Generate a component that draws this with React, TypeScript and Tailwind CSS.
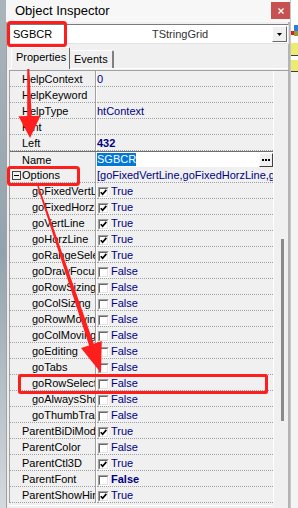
import React from "react";

type Row =
  | { kind: "text"; name: string; value: string; bold?: boolean }
  | { kind: "check"; name: string; sub?: boolean; on: boolean; bold?: boolean }
  | { kind: "name" }
  | { kind: "options" };

const rows: Row[] = [
  { kind: "text", name: "HelpContext", value: "0" },
  { kind: "text", name: "HelpKeyword", value: "" },
  { kind: "text", name: "HelpType", value: "htContext" },
  { kind: "text", name: "Hint", value: "" },
  { kind: "text", name: "Left", value: "432", bold: true },
  { kind: "name" },
  { kind: "options" },
  { kind: "check", name: "goFixedVertLine", sub: true, on: true },
  { kind: "check", name: "goFixedHorzLine", sub: true, on: true },
  { kind: "check", name: "goVertLine", sub: true, on: true },
  { kind: "check", name: "goHorzLine", sub: true, on: true },
  { kind: "check", name: "goRangeSelect", sub: true, on: true },
  { kind: "check", name: "goDrawFocusSelected", sub: true, on: false },
  { kind: "check", name: "goRowSizing", sub: true, on: false },
  { kind: "check", name: "goColSizing", sub: true, on: false },
  { kind: "check", name: "goRowMoving", sub: true, on: false },
  { kind: "check", name: "goColMoving", sub: true, on: false },
  { kind: "check", name: "goEditing", sub: true, on: false },
  { kind: "check", name: "goTabs", sub: true, on: false },
  { kind: "check", name: "goRowSelect", sub: true, on: false },
  { kind: "check", name: "goAlwaysShowEditor", sub: true, on: false },
  { kind: "check", name: "goThumbTracking", sub: true, on: false },
  { kind: "check", name: "ParentBiDiMode", on: true },
  { kind: "check", name: "ParentColor", on: false },
  { kind: "check", name: "ParentCtl3D", on: true },
  { kind: "check", name: "ParentFont", on: false, bold: true },
  { kind: "check", name: "ParentShowHint", on: true },
];

const dotted = "border-b border-dotted border-[#a0a0a0]";

function Sep() {
  return (
    <>
      <div className="w-px shrink-0 bg-[#a0a0a0]" />
      <div className="w-px shrink-0 bg-white" />
    </>
  );
}

function Check({ on }: { on: boolean }) {
  return (
    <span className="mt-[4px] flex h-[11px] w-[11px] shrink-0 border-t border-l border-t-[#a0a0a0] border-l-[#a0a0a0] border-r border-b border-r-white border-b-white">
      <span className="flex flex-1 items-center justify-center border-t border-l border-t-[#696969] border-l-[#696969] border-r border-b border-r-[#e3e3e3] border-b-[#e3e3e3] bg-white">
        {on && (
          <svg width="7" height="7" viewBox="0 0 7 7">
            <path d="M0.8 3.2 L2.6 5.2 L6.4 0.9" fill="none" stroke="#000" strokeWidth="1.7" />
          </svg>
        )}
      </span>
    </span>
  );
}

function GridRow({ row }: { row: Row }) {
  if (row.kind === "name") {
    return (
      <div className="flex h-[16px] border-t border-[#6f6f6f]">
        <div className="w-[85px] overflow-hidden whitespace-nowrap pl-[12px] pt-[1px] leading-[14px]">Name</div>
        <Sep />
        <div className="flex w-[176px] items-start justify-between bg-white">
          <span className="mt-[1px] bg-[#0078d7] leading-[13px] text-white">SGBCR</span>
          <span className="mt-[1px] flex h-[14px] w-[14px] items-center justify-center gap-[1px] border-t border-l border-white border-r border-b border-r-[#404040] border-b-[#404040] bg-[#f0f0f0]">
            <span className="h-[2px] w-[2px] bg-black" />
            <span className="h-[2px] w-[2px] bg-black" />
            <span className="h-[2px] w-[2px] bg-black" />
          </span>
        </div>
      </div>
    );
  }
  if (row.kind === "options") {
    return (
      <div className="flex h-[16px]">
        <div className={`flex w-[85px] ${dotted}`}>
          <span className="ml-[2px] mt-[4px] flex h-[9px] w-[9px] items-center justify-center border border-[#404040] bg-[#f0f0f0]">
            <span className="h-px w-[5px] bg-black" />
          </span>
          <span className="ml-[1px] pt-[1px] leading-[15px]">Options</span>
        </div>
        <Sep />
        <div className={`w-[176px] overflow-hidden whitespace-nowrap pt-[1px] leading-[15px] text-[#000080] ${dotted}`}>
          [goFixedVertLine,goFixedHorzLine,goVertLine,goHorzLine,goRangeSelect]
        </div>
      </div>
    );
  }
  const indent = row.kind === "check" && row.sub ? "pl-[22px]" : "pl-[12px]";
  return (
    <div className="flex h-[16px]">
      <div className={`w-[85px] overflow-hidden whitespace-nowrap pt-[1px] leading-[15px] ${indent} ${dotted}`}>
        {row.name}
      </div>
      <Sep />
      <div className={`flex w-[176px] overflow-hidden whitespace-nowrap text-[#000080] ${dotted}`}>
        {row.kind === "text" ? (
          <span className={`pt-[1px] leading-[15px] ${row.bold ? "font-bold" : ""}`}>{row.value}</span>
        ) : (
          <>
            <span className="ml-[1px]">
              <Check on={row.on} />
            </span>
            <span className={`ml-[2px] pt-[1px] leading-[15px] ${row.bold ? "font-bold" : ""}`}>
              {row.on ? "True" : "False"}
            </span>
          </>
        )}
      </div>
    </div>
  );
}

function arrow(x0: number, y0: number, x1: number, y1: number, w0: number, w1: number, hl: number, hw: number) {
  const len = Math.hypot(x1 - x0, y1 - y0);
  const dx = (x1 - x0) / len;
  const dy = (y1 - y0) / len;
  const nx = -dy;
  const ny = dx;
  const bx = x1 - dx * hl;
  const by = y1 - dy * hl;
  const pts = [
    [x0 + (nx * w0) / 2, y0 + (ny * w0) / 2],
    [bx + (nx * w1) / 2, by + (ny * w1) / 2],
    [bx + (nx * hw) / 2, by + (ny * hw) / 2],
    [x1, y1],
    [bx - (nx * hw) / 2, by - (ny * hw) / 2],
    [bx - (nx * w1) / 2, by - (ny * w1) / 2],
    [x0 - (nx * w0) / 2, y0 - (ny * w0) / 2],
  ];
  return pts.map((p) => p.map((v) => v.toFixed(1)).join(",")).join(" ");
}

export default function App() {
  return (
    <div className="relative flex h-[508px] w-[298px] overflow-hidden font-['Liberation_Sans',Arial,sans-serif] text-[11px] text-black">
      {/* desktop behind */}
      <div className="w-[6px] shrink-0 bg-gradient-to-b from-[#aab4bb] via-[#93a3ad] to-[#d5dade]" />

      <div className="flex w-[284px] shrink-0 flex-col bg-[#f0f0f0]">
        {/* title bar */}
        <div className="flex h-[22px] justify-between bg-[#f7f7f7]">
          <span className="pl-[9px] text-[13px] leading-[21px] text-black">Object Inspector</span>
          <span className="mt-[2px] flex h-[17px] w-[19px] items-center justify-center bg-[#c75050]">
            <svg width="6" height="6" viewBox="0 0 6 6">
              <path d="M0.5 0.5 L5.5 5.5 M5.5 0.5 L0.5 5.5" stroke="#fff" strokeWidth="1.4" />
            </svg>
          </span>
        </div>

        <div className="flex flex-1 flex-col border-l border-r-2 border-l-[#a0a0a0] border-r-[#b4b4b4] pl-px">
          <div className="h-[2px]" />
          {/* component combo */}
          <div className="ml-px flex h-[20px] w-[280px] items-center border-t border-l border-t-[#7a7a7a] border-l-[#7a7a7a] border-r border-b border-r-[#e3e3e3] border-b-[#e3e3e3] bg-white">
            <span className="w-[142px] pl-[3px] leading-[18px]">SGBCR</span>
            <span className="flex-1 leading-[18px] text-[#333]">TStringGrid</span>
            <span className="mr-px flex h-[16px] w-[15px] items-center justify-center border-t border-l border-white border-r border-b border-r-[#696969] border-b-[#696969] bg-[#f0f0f0]">
              <svg width="5" height="3" viewBox="0 0 5 3">
                <path d="M0 0 H5 L2.5 3 Z" fill="#000" />
              </svg>
            </span>
          </div>

          {/* tabs */}
          <div className="flex h-[25px] items-end border-b border-white pl-[3px]">
            <div className="relative z-10 -mb-px h-[22px] w-[59px] rounded-t-[2px] border-t border-l border-white border-r border-r-[#696969] bg-[#f0f0f0] pl-[4px] pt-[2px] leading-[15px]">
              Properties
            </div>
            <div className="h-[18px] w-[44px] rounded-tr-[2px] border-t border-white border-r-2 border-r-[#808080] pl-[4px] pt-[1px] leading-[15px]">
              Events
            </div>
          </div>

          <div className="h-px" />
          <div className="ml-px h-px w-[280px] bg-[#a0a0a0]" />

          {/* grid + scrollbar */}
          <div className="flex h-[432px]">
            <div className="ml-px flex w-[264px] flex-col border-l border-[#a0a0a0] bg-[#f0f0f0]">
              {rows.map((r, i) => (
                <GridRow key={i} row={r} />
              ))}
            </div>
            <div className="w-px bg-white" />
            <div className="w-[15px] pt-[168px]">
              <div className="ml-[7px] h-[182px] w-[3px] bg-[#8a8a8a]" />
            </div>
          </div>

          <div className="h-[2px]" />
          <div className="ml-px h-px w-[264px] bg-white" />
          <div className="h-[2px]" />
        </div>
      </div>

      {/* neighbouring window */}
      <div className="flex w-[8px] shrink-0 flex-col border-l border-[#c8c8c8] bg-white">
        <div className="h-[25px]" />
        <div className="flex h-[12px]">
          <div className="mt-[6px] h-[4px] w-[3px] bg-[#d42020]" />
          <div className="flex flex-col">
            <div className="h-[6px] w-[4px] bg-[#2a7de1]" />
            <div className="h-[5px] w-[4px] bg-[#9a9a30]" />
          </div>
        </div>
        <div className="h-[6px]" />
        <div className="h-[12px] bg-[#ecec70]" />
        <div className="h-px bg-[#404040]" />
        <div className="h-[4px]" />
        <div className="h-[11px] bg-[#ecec70]" />
        <div className="h-px bg-[#404040]" />
        <div className="flex-1 bg-[#f4f4f4]" />
      </div>

      {/* annotations */}
      <svg className="pointer-events-none absolute left-0 top-0" width="298" height="508" viewBox="0 0 298 508">
        <g fill="none" stroke="#ff1e1e" strokeWidth="3">
          <rect x="8.5" y="22.5" width="57" height="23" rx="2" />
          <rect x="8.5" y="167.5" width="70" height="17" rx="2" />
          <rect x="19.5" y="375.5" width="247" height="17" rx="1" />
        </g>
        <polygon points={arrow(28, 56, 30, 138, 1.5, 4.5, 22, 22)} fill="#ff1e1e" />
        <polygon points={arrow(38, 186, 101, 373, 1.5, 5, 30, 22)} fill="#ff1e1e" />
      </svg>
    </div>
  );
}
